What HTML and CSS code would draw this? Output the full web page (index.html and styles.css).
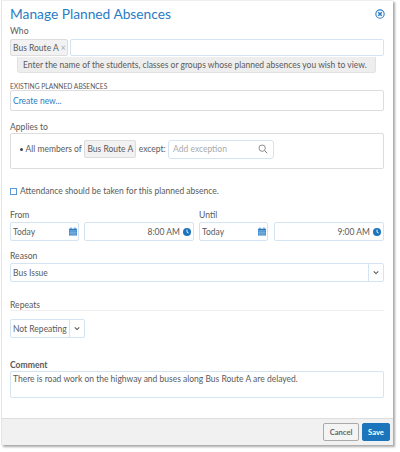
FILE: index.html
```html
<!DOCTYPE html>
<html lang="en">
<head>
<meta charset="utf-8">
<title>Manage Planned Absences</title>
<link rel="stylesheet" href="styles.css">
</head>
<body>
<div class="dialog">
  <div class="content">
    <header class="head">
      <h1>Manage Planned Absences</h1>
      <svg class="close" viewBox="0 0 12 12" width="10" height="10"><circle cx="6" cy="6" r="5" fill="none" stroke="#2a7cc4" stroke-width="1.3"/><path d="M3.9 3.9l4.2 4.2M8.1 3.9l-4.2 4.2" stroke="#2a7cc4" stroke-width="1.8"/></svg>
    </header>
    <label class="lab who-lab">Who</label>
    <div class="who">
      <span class="chip tag">Bus Route A <i>×</i></span>
      <span class="field who-in"></span>
    </div>
    <div class="hint">Enter the name of the students, classes or groups whose planned absences you wish to view.</div>
    <div class="caps">EXISTING PLANNED ABSENCES</div>
    <div class="box existing"><a>Create new...</a></div>
    <label class="lab applies-lab">Applies to</label>
    <div class="box applies">
      <span class="dot"></span><span>All members of</span>
      <span class="chip group">Bus Route A</span>
      <span>except:</span>
      <span class="field except"><em>Add exception</em>
        <svg viewBox="0 0 12 12" width="10" height="10"><circle cx="5" cy="5" r="3.8" fill="none" stroke="#777" stroke-width="1"/><path d="M8 8l3 3" stroke="#777" stroke-width="1.2"/></svg>
      </span>
    </div>
    <div class="check"><span class="cb"></span>Attendance should be taken for this planned absence.</div>
    <div class="times">
      <div class="col">
        <label class="lab">From</label>
        <div class="pair">
          <span class="field date">Today
            <svg viewBox="0 0 10 10" width="8" height="9"><path d="M0 1.5h10V10H0z" fill="#2a7cc4"/><path d="M2.5 0v2M7.5 0v2" stroke="#2a7cc4" stroke-width="1.2"/><path d="M0 4h10M0 6h10M0 8h10M2.5 4v6M5 4v6M7.5 4v6" stroke="#cfe2f3" stroke-width=".5"/></svg>
          </span>
          <span class="field time">8:00 AM
            <svg viewBox="0 0 10 10" width="8" height="8"><circle cx="5" cy="5" r="5" fill="#1b75bc"/><path d="M5 2v3.2l2 1" fill="none" stroke="#fff" stroke-width="1.1"/></svg>
          </span>
        </div>
      </div>
      <div class="col">
        <label class="lab">Until</label>
        <div class="pair">
          <span class="field date">Today
            <svg viewBox="0 0 10 10" width="8" height="9"><path d="M0 1.5h10V10H0z" fill="#2a7cc4"/><path d="M2.5 0v2M7.5 0v2" stroke="#2a7cc4" stroke-width="1.2"/><path d="M0 4h10M0 6h10M0 8h10M2.5 4v6M5 4v6M7.5 4v6" stroke="#cfe2f3" stroke-width=".5"/></svg>
          </span>
          <span class="field time">9:00 AM
            <svg viewBox="0 0 10 10" width="8" height="8"><circle cx="5" cy="5" r="5" fill="#1b75bc"/><path d="M5 2v3.2l2 1" fill="none" stroke="#fff" stroke-width="1.1"/></svg>
          </span>
        </div>
      </div>
    </div>
    <label class="lab reason-lab">Reason</label>
    <div class="select full">
      <span class="val">Bus Issue</span>
      <span class="arrow"><svg viewBox="0 0 8 6" width="6" height="5"><path d="M1 1.5l3 3 3-3" fill="none" stroke="#555" stroke-width="1.4"/></svg></span>
    </div>
    <div class="lab repeats-lab">Repeats</div>
    <div class="select small">
      <span class="val">Not Repeating</span>
      <span class="arrow"><svg viewBox="0 0 8 6" width="6" height="5"><path d="M1 1.5l3 3 3-3" fill="none" stroke="#555" stroke-width="1.4"/></svg></span>
    </div>
    <label class="lab comment-lab">Comment</label>
    <div class="field comment">There is road work on the highway and buses along Bus Route A are delayed.</div>
  </div>
  <footer class="foot">
    <button class="btn cancel">Cancel</button>
    <button class="btn save">Save</button>
  </footer>
</div>
</body>
</html>
```

FILE: styles.css
```css
* { box-sizing: border-box; }
html, body { margin: 0; padding: 0; background: #fff; }
body { width: 400px; height: 452px; font-family: "Lato", "Liberation Sans", sans-serif; font-size: 8.5px; color: #5a5a5a; overflow: hidden; }
.dialog { width: 392px; height: 445px; margin-left: 1px; background: #fff; display: flex; flex-direction: column; box-shadow: 2px 2px 2px #aaa; border-left: 1px solid #e4e4e4; border-top: 1px solid #eee; }
.content { flex: 1; padding: 0 9px 0 8px; display: flex; flex-direction: column; align-items: stretch; }
.head { display: flex; justify-content: space-between; align-items: center; height: 24px; }
h1 { margin: 0; font-size: 13.75px; font-weight: 400; color: #2a7cc4; }
.close { margin-right: -1px; margin-top: 1px; }
.lab { display: block; font-size: 8.6px; line-height: 12px; color: #5a5a5a; }
.field { display: flex; align-items: center; border: 1px solid #d4e4f2; border-radius: 2px; background: #fff; font-size: 8.5px; color: #5a5a5a; }
.who { display: flex; gap: 2px; margin-top: 2px; height: 17px; }
.chip { display: inline-flex; align-items: center; border: 1px solid #ddd; background: #f2f2f2; border-radius: 2px; font-size: 8.5px; }
.tag { width: 58px; padding-left: 2px; white-space: nowrap; }
.tag i { font-style: normal; color: #aaa; margin-left: 2px; }
.who-in { flex: 1; }
.hint { margin: 1px 0 0 7px; height: 16px; width: 359px; display: flex; align-items: center; padding-left: 5px; background: #eee; border: 1px solid #e2e2e2; border-top: 0; border-radius: 0 0 3px 3px; font-size: 8.5px; white-space: nowrap; }
.caps { margin-top: 9px; font-size: 6.7px; line-height: 8px; color: #5a5a5a; white-space: nowrap; }
.box { border: 1px solid #ddd; border-radius: 2px; }
.existing { height: 21px; display: flex; align-items: center; padding-left: 2px; }
.existing a { color: #2a7cc4; font-size: 8.5px; }
.applies-lab { margin-top: 10px; }
.applies { height: 36px; display: flex; align-items: center; padding: 0 0 4px 9px; white-space: nowrap; gap: 2.5px; }
.dot { width: 3px; height: 3px; background: #444; border-radius: 50%; }
.group { width: 52px; height: 18px; justify-content: center; }
.except { width: 106px; height: 19px; padding: 0 5px 0 4px; justify-content: space-between; border-radius: 3px; }
.except em { font-style: normal; color: #aaa; }
.check { display: flex; align-items: center; margin-top: 16px; height: 12px; gap: 3px; white-space: nowrap; font-size: 8.5px; }
.cb { width: 7px; height: 7px; border: 1px solid #5b9bd5; }
.times { display: flex; gap: 5px; margin-top: 12px; }
.col { flex: 0 0 auto; }
.pair { display: flex; gap: 6px; margin-top: 1px; }
.col:first-child .pair { gap: 5px; }
.date { width: 69px; height: 19px; padding: 0 1px 0 2px; justify-content: space-between; }
.time { width: 110px; height: 19px; padding-right: 2px; justify-content: flex-end; gap: 3px; }
.reason-lab { margin-top: 9px; }
.select { display: flex; border: 1px solid #d4e4f2; border-radius: 2px; height: 19px; align-items: stretch; margin-top: 1px; }
.val { flex: 1; display: flex; align-items: center; padding-left: 2px; white-space: nowrap; }
.arrow { width: 15px; border-left: 1px solid #d4e4f2; display: flex; align-items: center; justify-content: center; }
.repeats-lab { margin-top: 18px; border-bottom: 1px solid #eee; line-height: 10px; height: 11px; }
.small { width: 75px; margin-top: 8px; }
.comment-lab { margin-top: 22px; font-weight: 700; line-height: 11px; }
.comment { height: 27px; align-items: flex-start; padding: 2px; white-space: nowrap; font-size: 8.5px; }
.foot { height: 27px; background: #f1f1f1; border-top: 1px solid #ddd; display: flex; justify-content: flex-end; align-items: center; gap: 3px; padding-right: 3px; }
.btn { height: 18px; border-radius: 2px; font-family: inherit; font-size: 7.6px; font-weight: 700; padding: 0; }
.cancel { width: 36px; background: #f4f4f4; border: 1px solid #aaa; color: #666; }
.save { width: 28px; background: #1b75bc; border: 1px solid #1b75bc; color: #fff; }
```
